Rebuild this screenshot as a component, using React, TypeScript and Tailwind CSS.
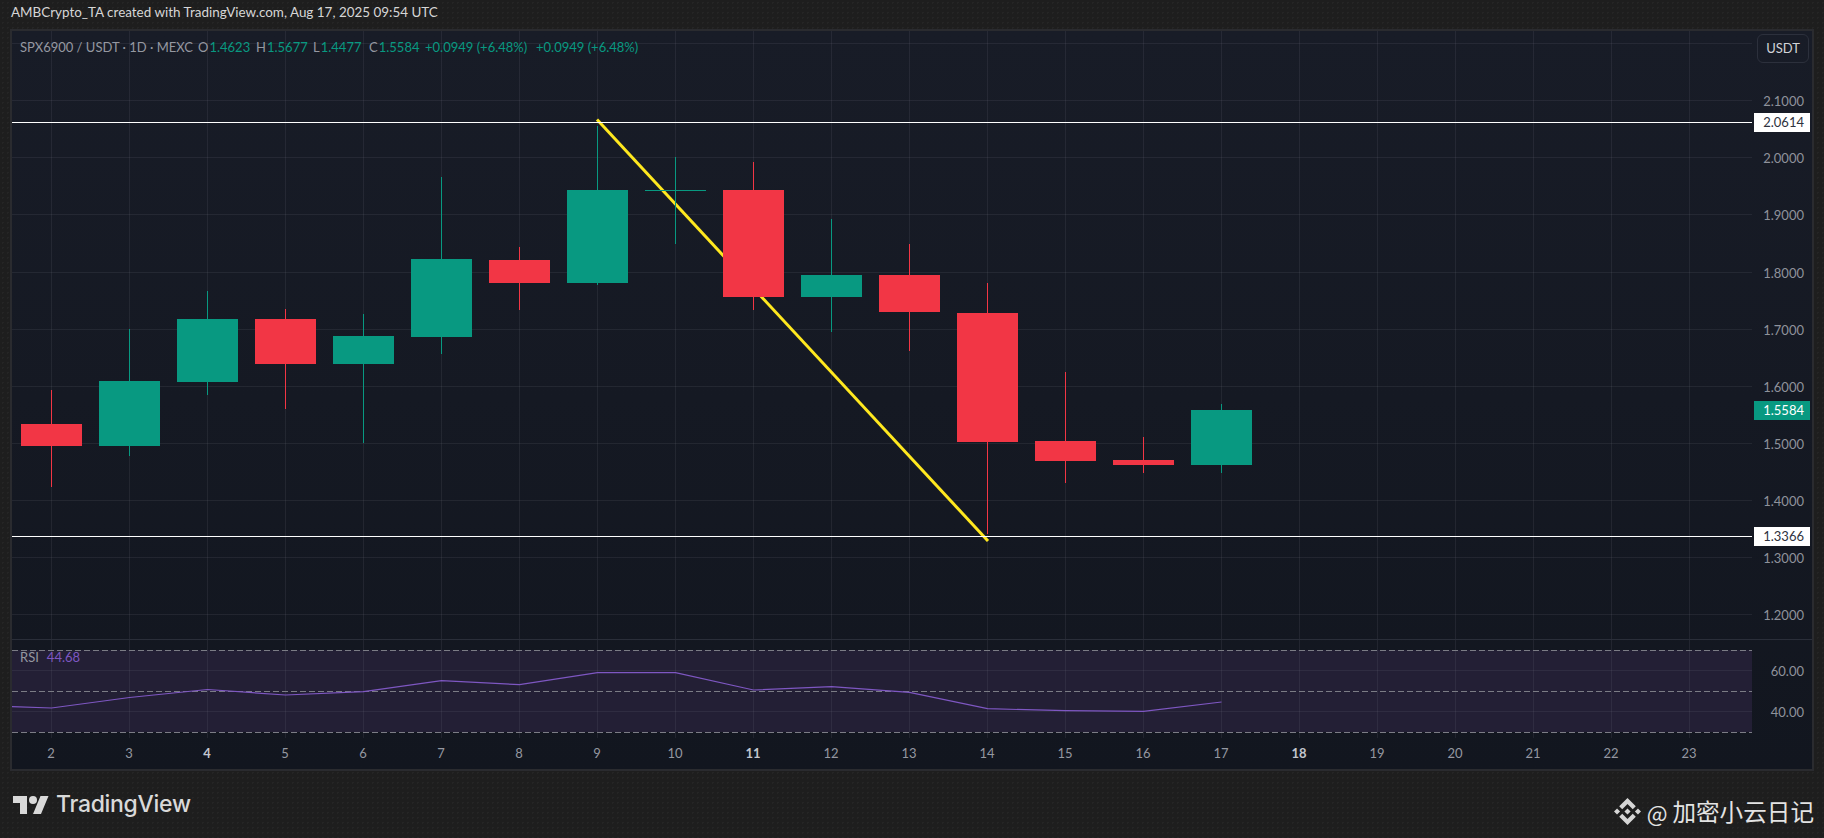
const GREEN = "#089981";
const RED = "#f23645";

// each candle: [body top, body bottom, wick top, wick bottom, up?]
const candles: [number, number, number, number, boolean][] = [
  [424, 446, 390, 487, false],
  [381, 446, 329, 456, true],
  [319, 382, 291, 395, true],
  [319, 364, 309, 409, false],
  [336, 364, 314, 443, true],
  [259, 337, 177, 354, true],
  [260, 283, 247, 310, false],
  [190, 283, 126, 285, true],
  [190, 191, 157, 244, true],
  [190, 297, 162, 310, false],
  [275, 297, 219, 332, true],
  [275, 312, 244, 351, false],
  [313, 442, 283, 534, false],
  [441, 461, 372, 483, false],
  [460, 465, 437, 473, false],
  [410, 465, 404, 473, true],
];

const days = [2, 3, 4, 5, 6, 7, 8, 9, 10, 11, 12, 13, 14, 15, 16, 17, 18, 19, 20, 21, 22, 23];
const gridY = [43, 100, 157, 214, 272, 329, 386, 443, 500, 557, 614];
const rsiGridY = [670, 711];
const rsiDashes = [650, 691, 732];

const rsiPoints =
  "12,706.7 51.5,708 129.5,697.5 207.5,689.5 285.5,695 363.5,691.7 441.5,680.7 519.5,684.7 597.5,672.7 675.5,672.7 753.5,690 831.5,686.7 909.5,692.3 987.5,708.7 1065.5,710.7 1143.5,711.3 1221.5,702";

const priceLabels = [
  { text: "2.1000", y: 100 },
  { text: "2.0000", y: 157 },
  { text: "1.9000", y: 214 },
  { text: "1.8000", y: 272 },
  { text: "1.7000", y: 329 },
  { text: "1.6000", y: 386 },
  { text: "1.5000", y: 443 },
  { text: "1.4000", y: 500 },
  { text: "1.3000", y: 557 },
  { text: "1.2000", y: 614 },
  { text: "60.00", y: 670 },
  { text: "40.00", y: 711 },
];

const priceTags = [
  { text: "2.0614", y: 122, cls: "bg-white text-[#2e323d]" },
  { text: "1.5584", y: 410, cls: "bg-[#089981] text-white" },
  { text: "1.3366", y: 536, cls: "bg-white text-[#2e323d]" },
];

const ChartPlot = () => (
  <svg width="1740" height="707" viewBox="12 31 1740 707" className="block shrink-0" shapeRendering="crispEdges">
    <rect x="12" y="650" width="1740" height="82" fill="#231f35" />

    {gridY.concat(rsiGridY).map((y) => (
      <rect key={y} x="12" y={y} width="1740" height="1" fill="#787b86" fillOpacity="0.15" />
    ))}
    {days.map((d, i) => (
      <rect key={d} x={51 + i * 78} y="31" width="1" height="707" fill="#787b86" fillOpacity="0.15" />
    ))}
    <rect x="12" y="639" width="1740" height="1" fill="#2a2e39" />

    {rsiDashes.map((y) => (
      <line key={y} x1="12" x2="1752" y1={y + 0.5} y2={y + 0.5} stroke="#7b7c85" strokeDasharray="6 3" />
    ))}
    <polyline points={rsiPoints} fill="none" stroke="#7e57c2" strokeWidth="1.2" shapeRendering="auto" />

    <line x1="597" y1="119.5" x2="988" y2="541" stroke="#ffe81f" strokeWidth="3" shapeRendering="auto" />

    {candles.map(([top, bottom, wickTop, wickBottom, up], i) => {
      const left = 21 + i * 78;
      const color = up ? GREEN : RED;
      return (
        <g key={i} fill={color}>
          <rect x={51 + i * 78} y={wickTop} width="1" height={wickBottom - wickTop} />
          <rect x={left} y={top} width="61" height={bottom - top} />
        </g>
      );
    })}

    <rect x="12" y="122" width="1740" height="1" fill="#ffffff" />
    <rect x="12" y="536" width="1740" height="1" fill="#ffffff" />
  </svg>
);

const PriceAxis = () => (
  <div className="relative w-[60px] shrink-0 text-[13px] leading-none text-[#8f929b]">
    <div className="absolute right-[3px] top-[3px] flex h-[29px] w-[52px] items-center justify-center rounded-md border border-[#2c303c] text-[#d1d3d8]">
      USDT
    </div>
    {priceLabels.map((l) => (
      <span key={l.text} className="absolute right-[8px] -translate-y-1/2" style={{ top: l.y + 0.5 - 31 }}>
        {l.text}
      </span>
    ))}
    {priceTags.map((t) => (
      <span
        key={t.text}
        className={`absolute left-[2px] flex h-[19px] w-[56px] items-center justify-end pr-[6px] ${t.cls}`}
        style={{ top: t.y - 9 - 31 }}
      >
        {t.text}
      </span>
    ))}
    <div className="absolute inset-x-0 top-[608px] h-px bg-[#2a2e39]" />
  </div>
);

const Legend = () => (
  <div className="absolute left-[8px] top-[9px] flex items-center whitespace-nowrap text-[13px] leading-[15px] text-[#9598a1]">
    <span className="w-[178px]">SPX6900 / USDT · 1D · MEXC</span>
    <span className="w-[58px]">
      O<span className="ml-[1px] text-[#089981]">1.4623</span>
    </span>
    <span className="w-[57px]">
      H<span className="ml-[1px] text-[#089981]">1.5677</span>
    </span>
    <span className="w-[56px]">
      L<span className="ml-[1px] text-[#089981]">1.4477</span>
    </span>
    <span className="w-[56px]">
      C<span className="ml-[1px] text-[#089981]">1.5584</span>
    </span>
    <span className="w-[111px] text-[#089981]">+0.0949 (+6.48%)</span>
    <span className="text-[#089981]">+0.0949 (+6.48%)</span>
  </div>
);

export default function App() {
  return (
    <div
      className="flex h-[838px] w-[1824px] flex-col overflow-hidden bg-[#1e1e1e] bg-[radial-gradient(circle,#252525_1px,transparent_1px)] bg-[length:5px_5px]"
      style={{ fontFamily: '"Lato", "Liberation Sans", sans-serif' }}
    >
      <header className="flex h-[29px] shrink-0 items-center pb-[5px] pl-[11px] text-[13.45px] text-[#d6d6d6]">
        AMBCrypto_TA created with TradingView.com, Aug 17, 2025 09:54 UTC
      </header>

      <div className="relative ml-[10px] flex h-[742px] w-[1804px] shrink-0 flex-col border-2 border-[#2a2b2f] bg-gradient-to-b from-[#181c27] to-[#12161f]">
        <div className="flex h-[707px]">
          <ChartPlot />
          <PriceAxis />
        </div>
        <div className="flex h-[31px] items-center pb-[1px] text-[13px] leading-none text-[#9598a1]">
          {days.map((d) => (
            <span
              key={d}
              className={`w-[78px] shrink-0 text-center ${
                d === 4 || d === 11 || d === 18 ? "font-bold text-[#c3c6ce]" : ""
              }`}
            >
              {d}
            </span>
          ))}
        </div>
        <Legend />
        <div className="absolute left-[8px] top-[619px] flex gap-[8px] text-[13px] leading-[15px]">
          <span className="text-[#9598a1]">RSI</span>
          <span className="text-[#7e57c2]">44.68</span>
        </div>
      </div>

      <footer className="flex flex-1 items-start justify-between pl-[13px] pr-[10px]">
        <div className="mt-[22px] flex items-center gap-[7px] text-[#d9d9d9]">
          <svg width="36" height="18" viewBox="0 4 36 18" fill="currentColor" className="shrink-0">
            <path d="M14 22H7V11H0V4h14v18zM28 22h-8l7.5-18h8L28 22z" />
            <circle cx="20" cy="8" r="4" />
          </svg>
          <span
            className="text-[23px] font-medium leading-none tracking-[-0.3px]"
            style={{ fontFamily: '"Inter", sans-serif' }}
          >
            TradingView
          </span>
        </div>
        <div className="mt-[27px] flex items-center text-[#e3e3e3]">
          <svg width="27" height="27" viewBox="0 0 126.61 126.61" fill="#d6d6d6" className="mr-[6px] shrink-0">
            <path d="M38.73 53.2l24.59-24.58 24.6 24.6 14.3-14.31L63.32 0 24.42 38.9zM0 63.31l14.3-14.31 14.31 14.31-14.31 14.3zM38.73 73.41l24.59 24.59 24.6-24.6 14.31 14.29-38.9 38.91-38.91-38.88-.02-.02zM98 63.31l14.3-14.31 14.31 14.3-14.31 14.32zM77.83 63.3L63.32 48.78 52.59 59.51l-1.24 1.23-2.54 2.54 14.51 14.5 14.51-14.47z" />
          </svg>
          <span
            className="flex items-center text-[23.6px] leading-none"
            style={{ fontFamily: '"Noto Sans CJK SC", "Noto Sans", sans-serif' }}
          >
            <span className="mr-[5px] text-[22px]">@</span>
            加密小云日记
          </span>
        </div>
      </footer>
    </div>
  );
}
